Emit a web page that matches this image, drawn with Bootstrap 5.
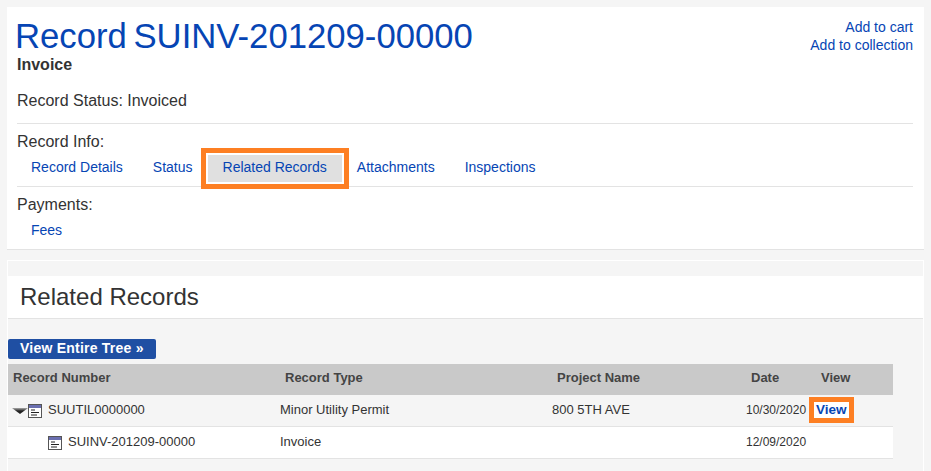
<!DOCTYPE html>
<html lang="en">
<head>
<meta charset="utf-8">
<title>Record SUINV-201209-00000</title>
<link href="https://cdn.jsdelivr.net/npm/bootstrap@5.3.0/dist/css/bootstrap.min.css" rel="stylesheet">
<style>
html,body{height:471px;overflow:hidden}
body{background:#f5f5f5;font-family:"Liberation Sans",Arial,sans-serif;color:#333;font-size:14px;padding:7px 7px 0}
a{color:#0645b4;text-decoration:none}
.rec-panel{background:#fff;border-bottom:1px solid #e3e3e3;height:243px;padding:0 11px 0 10px}
.rec-head{padding-top:9px;height:116px}
.rec-title{font-size:34.7px;line-height:40px;color:#0645b4;font-weight:400;margin:0 0 0 -2px;word-spacing:-3px}
.rec-type{font-size:16px;line-height:18px;font-weight:700;margin:0}
.rec-status{font-size:16px;line-height:18px;margin-top:18px}
.rec-actions{line-height:18px;font-size:14px;padding-top:2px}
.rec-sec{border-top:1px solid #e3e3e3}
.sec-label{font-size:16px;line-height:18px;padding-top:9px}
.rec-tabs{padding-left:0;margin:0;list-style:none;height:35px}
.rec-tabs a{display:block;padding:0 14px;line-height:22px}
.rec-tabs li{padding-top:5px}
.rec-tabs li+li{margin-left:2px}
.rec-tabs li.tab-on{margin:-3px -8px 0 -6px;padding-top:0}
.tab-box{border:5px solid #fd7f23;padding:2px;background:#fff;height:41px}
.rec-tabs .tab-box a{background:#e0e0e0;line-height:25px;height:27px;padding:0 15px}
.rel-panel{margin-top:10px;border:1px solid #fff;border-bottom:0;height:211px}
.rel-head{margin-top:15px;background:#fff;height:43px;border-bottom:1px solid #e3e3e3}
.rel-title{font-size:24px;font-weight:400;line-height:42px;padding-left:12px;margin:0}
.tree-btn{display:block;width:148px;margin:20px 0 5px 0;background:#1f4fa3;color:#fff;font-weight:700;font-size:14px;line-height:18px;padding:0 0 2px 12px;border-radius:2px;letter-spacing:.23px}
.rec-tbl{width:885px;table-layout:fixed;border-collapse:separate;border-spacing:0;font-size:13px}
.rec-tbl th{background:#c9c9c9;height:31px;padding:0 0 3px 5px;font-size:13px;color:#444}
.rec-tbl td{height:32px;padding:0 0 2px;border-bottom:1px solid #e3e3e3;color:#333;vertical-align:middle}
.rec-tbl td.cell-date{font-size:12px}
.row-alt td{background:#f5f5f5}
.row-plain td{background:#fff}
.ico{width:14px;height:14px;flex:none}
.tree-cell{display:flex;align-items:center}
.tree-cell svg{margin-top:2px}
.tree-cell span{margin-left:6px}
.view-box{display:block;width:45px;border:5px solid #fd7f23;background:#fff;font-weight:700;font-size:13.5px;line-height:16px;padding:0 0 0 2px;margin:1px 0 0 -7px}
</style>
</head>
<body>
<section class="rec-panel">
  <div class="rec-head d-flex justify-content-between">
    <div>
      <h1 class="rec-title">Record SUINV-201209-00000</h1>
      <p class="rec-type">Invoice</p>
      <div class="rec-status">Record Status: Invoiced</div>
    </div>
    <div class="rec-actions text-end">
      <a href="#" class="d-block">Add to cart</a>
      <a href="#" class="d-block">Add to collection</a>
    </div>
  </div>
  <div class="rec-sec">
    <div class="sec-label">Record Info:</div>
    <ul class="rec-tabs d-flex">
      <li><a href="#">Record Details</a></li>
      <li><a href="#">Status</a></li>
      <li class="tab-on"><div class="tab-box"><a href="#">Related Records</a></div></li>
      <li><a href="#">Attachments</a></li>
      <li><a href="#">Inspections</a></li>
    </ul>
  </div>
  <div class="rec-sec">
    <div class="sec-label">Payments:</div>
    <ul class="rec-tabs d-flex">
      <li><a href="#">Fees</a></li>
    </ul>
  </div>
</section>
<section class="rel-panel">
  <div class="rel-head"><h2 class="rel-title">Related Records</h2></div>
  <a href="#" class="tree-btn">View Entire Tree »</a>
  <table class="rec-tbl">
    <colgroup><col style="width:272px"><col style="width:272px"><col style="width:194px"><col style="width:70px"><col style="width:77px"></colgroup>
    <thead><tr><th>Record Number</th><th>Record Type</th><th>Project Name</th><th>Date</th><th>View</th></tr></thead>
    <tbody>
      <tr class="row-alt">
        <td><div class="tree-cell">
          <svg width="16" height="8" viewBox="0 0 16 8" class="ms-1"><defs><linearGradient id="arrowfill" x1="0" y1="0" x2="0" y2="1"><stop offset="0" stop-color="#aaa"/><stop offset=".5" stop-color="#222"/></linearGradient></defs><path d="M0 1h16L8 7z" fill="url(#arrowfill)"/></svg>
          <svg class="ico" viewBox="0 0 14 14"><rect x=".5" y=".5" width="13" height="13" fill="#fff" stroke="#555"/><rect x="1" y="1" width="12" height="3" fill="#6a6fb0"/><path d="M3 6h4M3 8.500h8M3 11h6" stroke="#222"/></svg>
          <span>SUUTIL0000000</span></div></td>
        <td>Minor Utility Permit</td>
        <td>800 5TH AVE</td>
        <td class="cell-date">10/30/2020</td>
        <td><a href="#" class="view-box">View</a></td>
      </tr>
      <tr class="row-plain">
        <td><div class="tree-cell" style="padding-left:40px">
          <svg class="ico" viewBox="0 0 14 14"><rect x=".5" y=".5" width="13" height="13" fill="#fff" stroke="#555"/><rect x="1" y="1" width="12" height="3" fill="#6a6fb0"/><path d="M3 6h4M3 8.500h8M3 11h6" stroke="#222"/></svg>
          <span>SUINV-201209-00000</span></div></td>
        <td>Invoice</td>
        <td></td>
        <td class="cell-date">12/09/2020</td>
        <td></td>
      </tr>
    </tbody>
  </table>
</section>
</body>
</html>
